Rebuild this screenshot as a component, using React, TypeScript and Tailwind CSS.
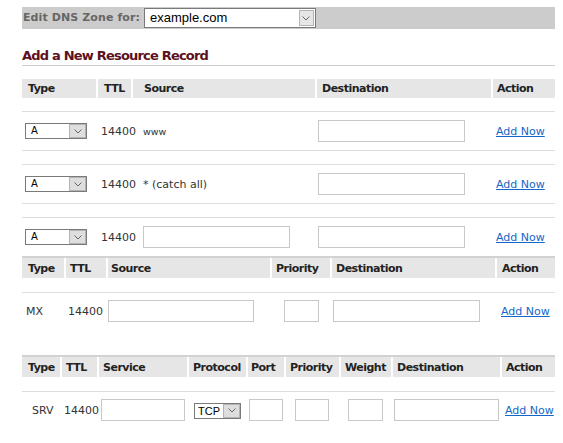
import React from "react";

function Chevron() {
  return (
    <svg width="8" height="5" viewBox="0 0 8 5" className="block">
      <path d="M0.5 0.5 L4 4 L7.5 0.5" stroke="#666" strokeWidth="1" fill="none" />
    </svg>
  );
}

function SmallSelect({ label, wide }: { label: string; wide?: boolean }) {
  return (
    <div
      className={
        wide
          ? "flex h-[16px] w-[47px] items-stretch border border-[#7a7a7a] bg-white"
          : "flex h-[16px] w-[62px] items-stretch border border-[#7a7a7a] bg-white"
      }
    >
      <span
        className={
          wide
            ? "flex-1 pl-[3px] text-[11px] leading-[14px] text-black font-['Liberation_Sans',sans-serif]"
            : "flex-1 pl-[5px] text-[10px] leading-[14px] text-black"
        }
      >
        {label}
      </span>
      <span className="flex w-[17px] items-center justify-center border border-[#b4b4b4] bg-[#dedede]">
        <Chevron />
      </span>
    </div>
  );
}

function Input({ cls }: { cls: string }) {
  return <input readOnly className={cls} />;
}

function AddNow() {
  return (
    <a href="#" className="text-[11px] text-[#1466c8] underline">
      Add Now
    </a>
  );
}

export default function App() {
  return (
    <div className="h-[443px] w-[563px] bg-white font-['DejaVu_Sans',Verdana,sans-serif] text-[11px] text-[#333]">
      <div className="ml-[22px] w-[533px] pt-[7px]">
        {/* Top bar */}
        <div className="flex h-[22px] items-center bg-[#cccccc]">
          <span className="pl-[1px] pt-[1px] text-[11px] font-bold tracking-[0.1px] text-[#666]">Edit DNS Zone for:</span>
          <div className="ml-[4px] flex h-[20px] w-[172px] items-stretch border border-[#7a7a7a] bg-white">
            <span className="flex-1 pl-[5px] font-['Liberation_Sans',Arial,sans-serif] text-[13px] leading-[18px] text-black">
              example.com
            </span>
            <span className="m-[1px] flex w-[15px] items-center justify-center border border-[#b4b4b4] bg-[#e6e6e6]">
              <Chevron />
            </span>
          </div>
        </div>

        {/* Title */}
        <div className="mt-[17px] h-[20px] border-b border-[#cccccc] text-[13px] font-bold leading-[19px] tracking-[-0.8px] text-[#5c1020]">
          Add a New Resource Record
        </div>

        {/* Header 1 */}
        <div className="mt-[13px] flex h-[19px] gap-[2px] text-[11px] font-bold tracking-[-0.5px] text-[#222]">
          <div className="flex w-[74px] items-center bg-[#e6e6e6] pl-[6px] pt-[2px]">Type</div>
          <div className="flex w-[33px] items-center bg-[#e6e6e6] pl-[6px] pt-[2px]">TTL</div>
          <div className="flex w-[182px] items-center bg-[#e6e6e6] pl-[11px] pt-[2px]">Source</div>
          <div className="flex w-[174px] items-center bg-[#e6e6e6] pl-[5px] pt-[2px]">Destination</div>
          <div className="flex w-[62px] items-center bg-[#e6e6e6] pl-[4px] pt-[2px]">Action</div>
        </div>

        {/* Row 1 */}
        <div className="mt-[13px] flex h-[40px] items-center border-y border-[#dddddd]">
          <div className="w-[76px] pl-[3px]">
            <SmallSelect label="A" />
          </div>
          <div className="w-[45px] pl-[3px] pt-[3px]">14400</div>
          <div className="w-[174px] pt-[3px] text-[9.5px]">www</div>
          <div className="w-[178px] pl-[1px]">
            <Input cls="block h-[22px] w-[147px] border border-[#c8c8c8] bg-white" />
          </div>
          <div className="pl-[1px] pt-[3px]">
            <AddNow />
          </div>
        </div>

        {/* Row 2 */}
        <div className="mt-[13px] flex h-[40px] items-center border-y border-[#dddddd]">
          <div className="w-[76px] pl-[3px]">
            <SmallSelect label="A" />
          </div>
          <div className="w-[45px] pl-[3px] pt-[3px]">14400</div>
          <div className="w-[174px] pt-[3px]">* (catch all)</div>
          <div className="w-[178px] pl-[1px]">
            <Input cls="block h-[22px] w-[147px] border border-[#c8c8c8] bg-white" />
          </div>
          <div className="pl-[1px] pt-[3px]">
            <AddNow />
          </div>
        </div>

        {/* Row 3 */}
        <div className="mt-[13px] flex h-[39px] items-center border-t border-[#dddddd]">
          <div className="w-[76px] pl-[3px]">
            <SmallSelect label="A" />
          </div>
          <div className="w-[45px] pl-[3px] pt-[3px]">14400</div>
          <div className="w-[174px]">
            <Input cls="block h-[22px] w-[147px] border border-[#c8c8c8] bg-white" />
          </div>
          <div className="w-[178px] pl-[1px]">
            <Input cls="block h-[22px] w-[147px] border border-[#c8c8c8] bg-white" />
          </div>
          <div className="pl-[1px] pt-[3px]">
            <AddNow />
          </div>
        </div>

        {/* Header 2 (MX) */}
        <div className="flex h-[22px] gap-[2px] border-t-2 border-[#d2d2d2] text-[11px] font-bold tracking-[-0.5px] text-[#222]">
          <div className="flex w-[42px] items-center bg-[#e6e6e6] pl-[6px] pt-[2px]">Type</div>
          <div className="flex w-[40px] items-center bg-[#e6e6e6] pl-[4px] pt-[2px]">TTL</div>
          <div className="flex w-[162px] items-center bg-[#e6e6e6] pl-[3px] pt-[2px]">Source</div>
          <div className="flex w-[58px] items-center bg-[#e6e6e6] pl-[4px] pt-[2px]">Priority</div>
          <div className="flex w-[163px] items-center bg-[#e6e6e6] pl-[4px] pt-[2px]">Destination</div>
          <div className="flex w-[58px] items-center bg-[#e6e6e6] pl-[5px] pt-[2px]">Action</div>
        </div>

        {/* MX row */}
        <div className="mt-[14px] flex h-[36px] items-center border-t border-[#dddddd]">
          <div className="w-[43px] pl-[4px] pt-[4px]">MX</div>
          <div className="w-[43px] pl-[3px] pt-[4px]">14400</div>
          <div className="w-[175px]">
            <Input cls="block h-[22px] w-[146px] border border-[#c8c8c8] bg-white" />
          </div>
          <div className="w-[49px] pl-[1px]">
            <Input cls="block h-[22px] w-[35px] border border-[#c8c8c8] bg-white" />
          </div>
          <div className="w-[169px] pl-[1px]">
            <Input cls="block h-[22px] w-[147px] border border-[#c8c8c8] bg-white" />
          </div>
          <div className="pt-[4px]">
            <AddNow />
          </div>
        </div>

        {/* Header 3 (SRV) */}
        <div className="mt-[27px] flex h-[22px] gap-[2px] border-t-2 border-[#d2d2d2] text-[11px] font-bold tracking-[-0.5px] text-[#222]">
          <div className="flex w-[38px] items-center bg-[#e6e6e6] pl-[6px] pt-[2px]">Type</div>
          <div className="flex w-[35px] items-center bg-[#e6e6e6] pl-[4px] pt-[2px]">TTL</div>
          <div className="flex w-[88px] items-center bg-[#e6e6e6] pl-[4px] pt-[2px]">Service</div>
          <div className="flex w-[57px] items-center bg-[#e6e6e6] pl-[4px] pt-[2px]">Protocol</div>
          <div className="flex w-[36px] items-center bg-[#e6e6e6] pl-[3px] pt-[2px]">Port</div>
          <div className="flex w-[53px] items-center bg-[#e6e6e6] pl-[4px] pt-[2px]">Priority</div>
          <div className="flex w-[50px] items-center bg-[#e6e6e6] pl-[4px] pt-[2px]">Weight</div>
          <div className="flex w-[107px] items-center bg-[#e6e6e6] pl-[4px] pt-[2px]">Destination</div>
          <div className="flex w-[53px] items-center bg-[#e6e6e6] pl-[4px] pt-[2px]">Action</div>
        </div>

        {/* SRV row */}
        <div className="mt-[14px] flex h-[36px] items-center border-t border-[#dddddd]">
          <div className="w-[41px] pl-[10px] pt-[4px]">SRV</div>
          <div className="w-[38px] pl-[1px] pt-[4px]">14400</div>
          <div className="w-[93px]">
            <Input cls="block h-[22px] w-[84px] border border-[#c8c8c8] bg-white" />
          </div>
          <div className="w-[55px] pt-[2px]">
            <SmallSelect label="TCP" wide />
          </div>
          <div className="w-[46px]">
            <Input cls="block h-[22px] w-[34px] border border-[#c8c8c8] bg-white" />
          </div>
          <div className="w-[53px]">
            <Input cls="block h-[22px] w-[34px] border border-[#c8c8c8] bg-white" />
          </div>
          <div className="w-[46px]">
            <Input cls="block h-[22px] w-[35px] border border-[#c8c8c8] bg-white" />
          </div>
          <div className="w-[111px]">
            <Input cls="block h-[22px] w-[105px] border border-[#c8c8c8] bg-white" />
          </div>
          <div className="pt-[4px]">
            <AddNow />
          </div>
        </div>
      </div>
    </div>
  );
}
